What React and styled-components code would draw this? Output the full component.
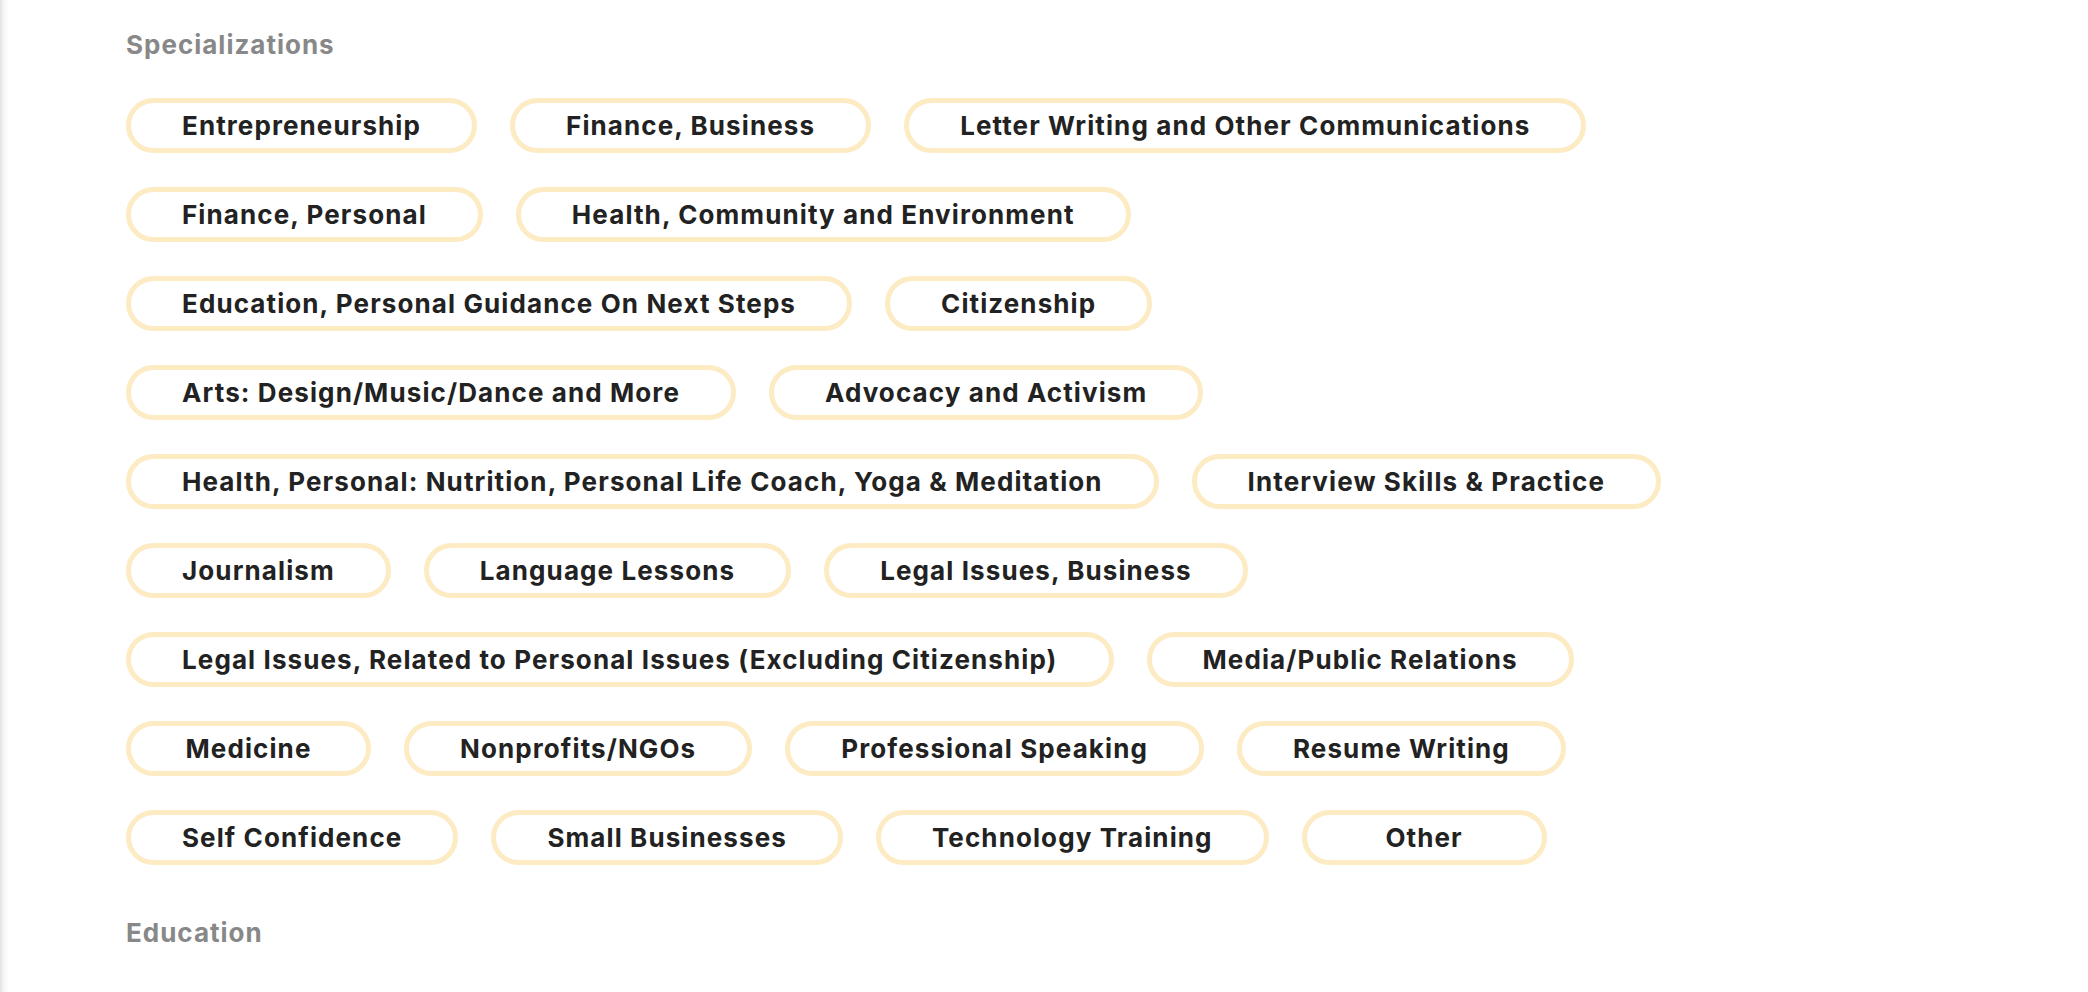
import styled, { createGlobalStyle } from 'styled-components';

const GlobalStyle = createGlobalStyle`
  html, body {
    margin: 0;
    padding: 0;
    background: #fff;
  }

  body {
    font-family: Inter, "Noto Sans", "Liberation Sans", sans-serif;
    color: #222;
  }
`;

const Panel = styled.main`
  min-height: 992px;
  box-sizing: border-box;
  padding: 29px 0 0 126px;
  background: linear-gradient(to right, #e3e3e3 0, #f6f6f6 4px, #fff 9px);
`;

const SectionTitle = styled.h3`
  margin: 0 0 ${(p) => p.$gap || 0}px;
  font-size: 26px;
  line-height: 31px;
  font-weight: 700;
  color: #888;
  letter-spacing: 1px;
`;

const TagList = styled.ul`
  list-style: none;
  margin: 0 0 52px;
  padding: 0;
  max-width: 1594px;
  display: flex;
  flex-wrap: wrap;
  column-gap: 33px;
  row-gap: 34px;
`;

const Tag = styled.li`
  box-sizing: border-box;
  min-width: 245px;
  height: 55px;
  padding: 0 51px;
  border: 5px solid #fcebc3;
  border-radius: 999px;
  font-size: 26px;
  line-height: 45px;
  font-weight: 700;
  letter-spacing: 1.1px;
  text-align: center;
  color: #222;
  white-space: nowrap;
`;

const specializations = [
  'Entrepreneurship',
  'Finance, Business',
  'Letter Writing and Other Communications',
  'Finance, Personal',
  'Health, Community and Environment',
  'Education, Personal Guidance On Next Steps',
  'Citizenship',
  'Arts: Design/Music/Dance and More',
  'Advocacy and Activism',
  'Health, Personal: Nutrition, Personal Life Coach, Yoga & Meditation',
  'Interview Skills & Practice',
  'Journalism',
  'Language Lessons',
  'Legal Issues, Business',
  'Legal Issues, Related to Personal Issues (Excluding Citizenship)',
  'Media/Public Relations',
  'Medicine',
  'Nonprofits/NGOs',
  'Professional Speaking',
  'Resume Writing',
  'Self Confidence',
  'Small Businesses',
  'Technology Training',
  'Other',
];

const App = () => (
  <>
    <GlobalStyle />
    <Panel>
      <SectionTitle $gap={38}>Specializations</SectionTitle>
      <TagList>
        {specializations.map((item) => (
          <Tag key={item}>{item}</Tag>
        ))}
      </TagList>
      <SectionTitle>Education</SectionTitle>
    </Panel>
  </>
);

export default App;
